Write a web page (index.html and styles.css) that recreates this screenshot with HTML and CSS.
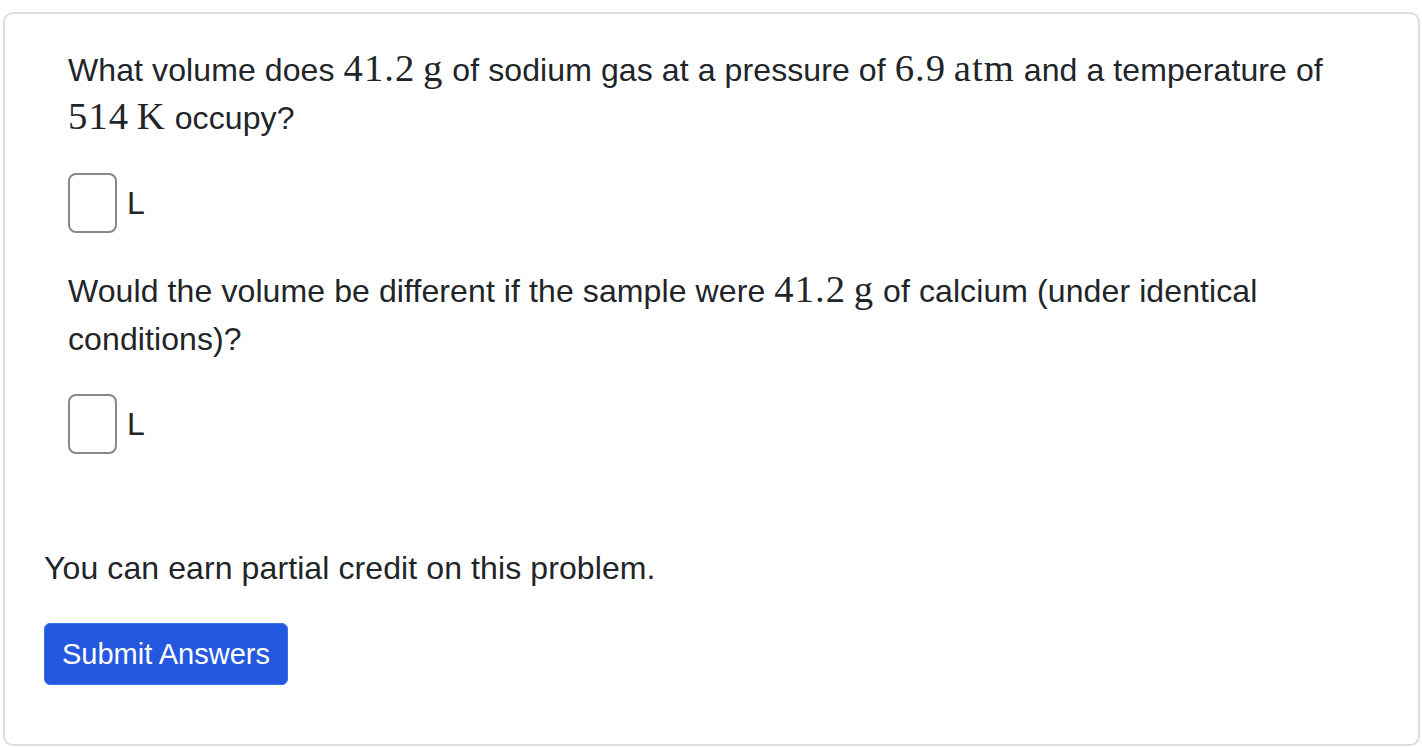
FILE: index.html
```html
<!DOCTYPE html>
<html lang="en">
<head>
  <meta charset="UTF-8" />
  <meta name="viewport" content="width=device-width, initial-scale=1.0"/>
  <title>Problem</title>
  <link rel="stylesheet" href="styles.css">
</head>
<body>
  <div class="problem-card">
    <div class="problem-body">
      <p class="question">
        What volume does <span class="math">41.2</span><span class="math unit">g</span> of sodium gas at a pressure of
        <span class="math">6.9</span><span class="math unit">atm</span> and a temperature of
        <span class="math">514</span><span class="math unit">K</span> occupy?
      </p>
      <div class="answer-row">
        <input class="answer" type="text" aria-label="answer 1">
        <span class="answer-unit">L</span>
      </div>

      <p class="question">
        Would the volume be different if the sample were <span class="math">41.2</span><span class="math unit">g</span> of calcium (under identical conditions)?
      </p>
      <div class="answer-row">
        <input class="answer" type="text" aria-label="answer 2">
        <span class="answer-unit">L</span>
      </div>
    </div>

    <p class="credit">You can earn partial credit on this problem.</p>
    <button class="submit">Submit Answers</button>
  </div>
</body>
</html>
```

FILE: styles.css
```css
* {
  box-sizing: border-box;
}
body {
  margin: 0;
  padding: 12px 2px 2px 3px;
  background: #fff;
  color: #212529;
  font-family: "Liberation Sans", Arial, sans-serif;
  font-size: 32px;
  line-height: 48px;
  letter-spacing: 0.1px;
}
.problem-card {
  border: 2px solid #dedede;
  border-radius: 10px;
  padding: 32px 40px 60px 39px;
  height: 734px;
}
.problem-body {
  padding: 0 24px;
  margin-bottom: 90px;
}
.question {
  margin: 0;
}
.math {
  font-family: "Liberation Serif", "DejaVu Serif", serif;
  font-size: 1.21em;
  line-height: 1;
  letter-spacing: 0.025em;
}
.unit {
  margin-left: 0.2em;
}
.answer-row {
  display: flex;
  align-items: center;
  margin: 31px 0 34px;
}
.answer {
  width: 49px;
  height: 60px;
  border: 2px solid #888;
  border-radius: 8px;
  padding: 0;
  font-size: 28px;
}
.answer-unit {
  margin-left: 10px;
}
.credit {
  margin: 0 0 31px;
}
.submit {
  font-family: inherit;
  font-size: 29px;
  color: #fff;
  background: #2458de;
  border: 1px solid #3b6ef0;
  border-radius: 6px;
  height: 62px;
  padding: 0 17px;
  cursor: pointer;
}
```
